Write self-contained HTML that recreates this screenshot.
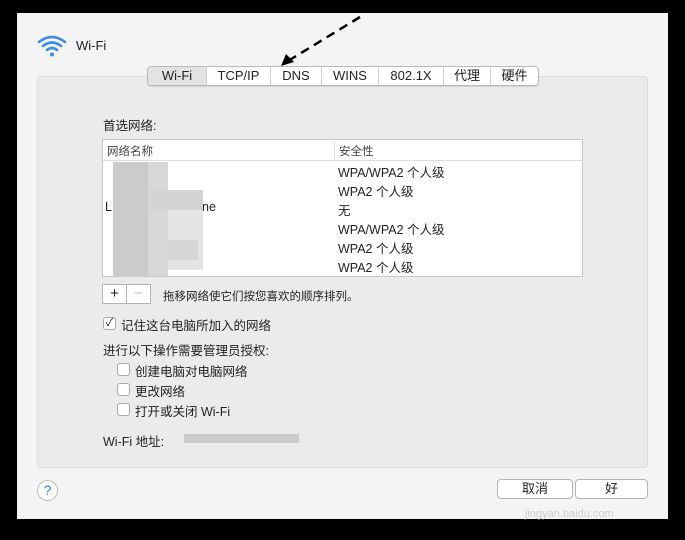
<!DOCTYPE html>
<html><head><meta charset="utf-8"><style>
*{margin:0;padding:0;box-sizing:border-box}
body{width:685px;height:540px;background:#000;position:relative;overflow:hidden;font-family:"Liberation Sans","Noto Sans CJK SC",sans-serif;font-size:12px;color:#222}
.win{position:absolute;left:17px;top:13px;width:651px;height:506px;background:#f4f4f4}
.a{position:absolute}
.box{left:37px;top:76px;width:611px;height:392px;background:#ebebeb;border:1px solid #dcdcdc;border-radius:4px}
.tabs{left:147px;top:66px;height:20px;display:flex;border:1px solid #b9b9b9;border-radius:4px;background:#fff;overflow:hidden;box-shadow:0 1px 1px rgba(0,0,0,.1)}
.tabs div{height:18px;line-height:18px;text-align:center;font-size:13px;border-left:1px solid #d0d0d0}
.tabs div:first-child{border-left:none;background:#e3e3e3}
.tbl{left:102px;top:139px;width:481px;height:138px;background:#fff;border:1px solid #c8c8c8;overflow:hidden}
.row{position:absolute;left:235px;font-size:12.5px}
.cb{position:absolute;width:13px;height:13px;border:1px solid #aaa;border-radius:3px;background:#fff}
.btn{position:absolute;height:20px;border:1px solid #b5b5b5;border-radius:4px;background:#fff;text-align:center;line-height:18px;font-size:13px}
.blur{position:absolute;background:#ccc}
</style></head><body>
<div class="win"></div>
<svg class="a" style="left:37px;top:34px" width="30" height="24" viewBox="0 0 30 24"><g fill="none" stroke="#3a8ee6" stroke-width="2.6" stroke-linecap="round"><path d="M2 8 Q15 -2 28 8"/><path d="M6 12 Q15 5 24 12"/><path d="M10 16 Q15 12 20 16"/></g><circle cx="15" cy="20.5" r="2" fill="#3a8ee6"/></svg>
<div class="a" style="left:76px;top:38px;font-size:13px">Wi-Fi</div>
<svg class="a" style="left:270px;top:14px" width="95" height="55"><path d="M90 3 L18 47" stroke="#000" stroke-width="2.5" stroke-dasharray="9 6" fill="none"/><path d="M11 52 L16 40 L24 48 Z" fill="#000"/></svg>
<div class="a box"></div>
<div class="a tabs"><div style="width:58px">Wi-Fi</div><div style="width:64px">TCP/IP</div><div style="width:51px">DNS</div><div style="width:57px">WINS</div><div style="width:65px">802.1X</div><div style="width:47px">代理</div><div style="width:48px">硬件</div></div>
<div class="a" style="left:103px;top:115px;font-size:12.5px">首选网络:</div>
<div class="a tbl">
<div class="a" style="left:0;top:0;width:479px;height:21px;border-bottom:1px solid #ddd"></div>
<div class="a" style="left:231px;top:2px;width:1px;height:17px;background:#ddd"></div>
<div class="a" style="left:4px;top:3px;font-size:11.5px;color:#444">网络名称</div>
<div class="a" style="left:236px;top:3px;font-size:11.5px;color:#444">安全性</div>
<div class="row" style="top:22px">WPA/WPA2 个人级</div>
<div class="row" style="top:41px">WPA2 个人级</div>
<div class="row" style="top:60px">无</div>
<div class="row" style="top:79px">WPA/WPA2 个人级</div>
<div class="row" style="top:98px">WPA2 个人级</div>
<div class="row" style="top:117px">WPA2 个人级</div>
<div class="a" style="left:2px;top:60px;font-size:12.5px">L</div>
<div class="a" style="left:99px;top:60px;font-size:12.5px">ne</div>
<div class="blur" style="left:10px;top:22px;width:35px;height:114px;background:#cbcbcb"></div>
<div class="blur" style="left:45px;top:22px;width:20px;height:114px;background:#d8d8d8"></div>
<div class="blur" style="left:65px;top:60px;width:35px;height:70px;background:#e4e4e4"></div>
<div class="blur" style="left:45px;top:50px;width:55px;height:20px;background:#d4d4d4"></div>
<div class="blur" style="left:65px;top:100px;width:30px;height:20px;background:#d6d6d6"></div>
</div>
<div class="btn" style="left:102px;top:284px;width:25px;border-radius:0;line-height:17px;font-size:15px">+</div>
<div class="btn" style="left:126px;top:284px;width:25px;border-radius:0;color:#bbb;font-size:15px;line-height:17px">−</div>
<div class="a" style="left:163px;top:288px;font-size:11.5px">拖移网络使它们按您喜欢的顺序排列。</div>
<div class="cb" style="left:103px;top:317px;font-size:11px;line-height:11px;text-align:center">✓</div>
<div class="a" style="left:121px;top:315px;font-size:12.5px">记住这台电脑所加入的网络</div>
<div class="a" style="left:103px;top:340px;font-size:12.5px">进行以下操作需要管理员授权:</div>
<div class="cb" style="left:117px;top:363px"></div><div class="a" style="left:135px;top:361px;font-size:12.5px">创建电脑对电脑网络</div>
<div class="cb" style="left:117px;top:383px"></div><div class="a" style="left:135px;top:381px;font-size:12.5px">更改网络</div>
<div class="cb" style="left:117px;top:403px"></div><div class="a" style="left:135px;top:401px;font-size:12.5px">打开或关闭 Wi-Fi</div>
<div class="a" style="left:103px;top:431px;font-size:12.5px">Wi-Fi 地址:</div>
<div class="blur" style="left:184px;top:434px;width:115px;height:9px;background:#ccc"></div>
<div class="a" style="left:37px;top:480px;width:21px;height:21px;border-radius:50%;border:1px solid #bbb;background:#fff;color:#3a7fd8;text-align:center;line-height:19px;font-size:14px">?</div>
<div class="btn" style="left:497px;top:479px;width:76px">取消</div>
<div class="btn" style="left:575px;top:479px;width:73px">好</div>
<div class="a" style="left:525px;top:508px;color:#ccc;font-size:11px">jingyan.baidu.com</div>
</body></html>
